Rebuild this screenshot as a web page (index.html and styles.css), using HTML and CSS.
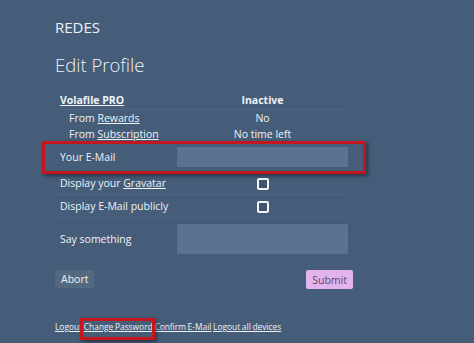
FILE: index.html
```html
<!DOCTYPE html>
<html lang="en">
<head>
  <meta charset="UTF-8">
  <meta name="viewport" content="width=device-width, initial-scale=1.0">
  <title>Edit Profile</title>
  <link rel="stylesheet" href="styles.css">
</head>
<body>
  <div class="page">
    <div class="user">REDES</div>
    <h1>Edit Profile</h1>
    <form id="profileForm">
      <table class="profile">
        <tr class="pro">
          <td class="label"><a href="#">Volafile PRO</a></td>
          <td class="value">Inactive</td>
        </tr>
        <tr class="sub">
          <td class="label">From <a href="#">Rewards</a></td>
          <td class="value">No</td>
        </tr>
        <tr class="sub">
          <td class="label">From <a href="#">Subscription</a></td>
          <td class="value">No time left</td>
        </tr>
        <tr class="email">
          <td class="label">Your E-Mail</td>
          <td><input type="email" id="email"></td>
        </tr>
        <tr class="check">
          <td class="label">Display your <a href="#">Gravatar</a></td>
          <td class="value"><input type="checkbox" id="gravatar"></td>
        </tr>
        <tr class="check">
          <td class="label">Display E-Mail publicly</td>
          <td class="value"><input type="checkbox" id="public"></td>
        </tr>
        <tr class="say">
          <td class="label">Say something</td>
          <td><textarea id="message"></textarea></td>
        </tr>
      </table>
      <div class="buttons">
        <button type="button" class="abort">Abort</button>
        <button type="submit" class="submit">Submit</button>
      </div>
    </form>
    <div class="links">
      <a href="#">Logout</a>
      <a href="#">Change Password</a>
      <a href="#">Confirm E-Mail</a>
      <a href="#">Logout all devices</a>
    </div>
  </div>
  <div class="mark mark-email"></div>
  <div class="mark mark-password"></div>
</body>
</html>
```
FILE: styles.css
```css
body {
  font-family: "Open Sans", "Noto Sans", sans-serif;
  background-color: #465d79;
  color: #eef2f6;
  margin: 0;
  padding: 0;
  height: 343px;
  overflow: hidden;
  position: relative;
}
.page {
  padding: 17px 0 0 55px;
  width: 298px;
}
.user {
  font-size: 15px;
  line-height: 20px;
}
h1 {
  font-size: 18.5px;
  font-weight: 300;
  line-height: 26px;
  margin: 15px 0 13px 0;
}
a {
  color: #eef2f6;
}
.profile {
  width: 293px;
  border-collapse: collapse;
  font-size: 10.5px;
}
.profile td {
  padding: 0;
  border-bottom: 1px solid rgba(255,255,255,0.06);
}
.profile .label {
  width: 117px;
  padding-left: 5px;
}
.profile .value {
  text-align: center;
}
.pro td {
  height: 18px;
  font-weight: bold;
  font-size: 10.5px;
}
.sub td {
  height: 16px;
  border-bottom: none;
}
.sub .label {
  padding-left: 14px;
}
.email td {
  height: 29px;
}
.check td {
  height: 22px;
}
.say td {
  height: 42px;
  border-bottom: none;
}
input[type="email"], textarea {
  display: block;
  width: 171px;
  height: 20px;
  border: none;
  border-radius: 1px;
  background-color: #5a7390;
  margin: 0;
  padding: 0;
}
textarea {
  height: 30px;
  resize: none;
}
input[type="checkbox"] {
  appearance: none;
  width: 12px;
  height: 12px;
  margin: 4px 0 0 0;
  border: 2px solid #f2f4f7;
  border-radius: 2px;
  box-sizing: border-box;
  background-color: #3f546d;
}
.buttons {
  display: flex;
  justify-content: space-between;
  margin-top: 10px;
}
button {
  font-family: inherit;
  font-size: 10.5px;
  border: none;
  border-radius: 2px;
  padding: 0 6px;
  height: 18px;
}
.abort {
  background-color: #53697f;
  color: #eef2f6;
}
.submit {
  background-color: #e3b3ee;
  color: #5f4873;
  height: 19px;
}
.links {
  margin-top: 32px;
  font-size: 8.4px;
  word-spacing: -0.5px;
}
.mark {
  position: absolute;
  border: 3px solid #c3161e;
  box-shadow: 2px 2px 4px rgba(0,0,0,0.45);
}
.mark-email {
  left: 42px;
  top: 141px;
  width: 318px;
  height: 27px;
}
.mark-password {
  left: 80px;
  top: 318px;
  width: 69px;
  height: 16px;
}
```
